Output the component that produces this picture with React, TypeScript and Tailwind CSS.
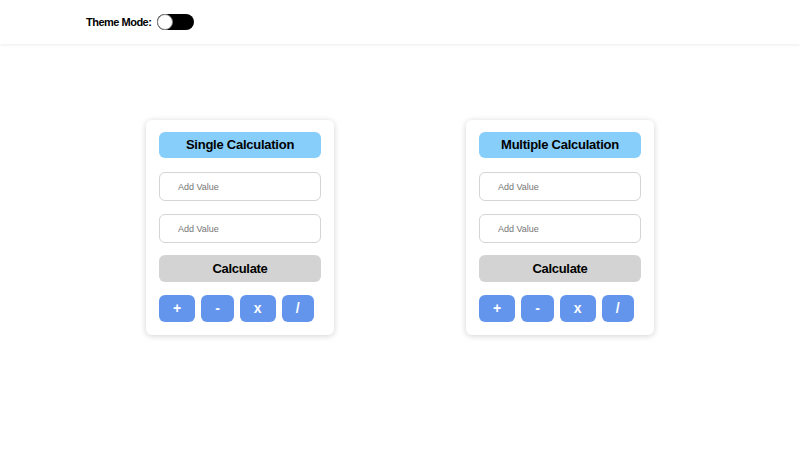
const ops = ['+', '-', 'x', '/'];

const CalcCard = ({ title }: { title: string }) => (
  <div className="w-[188px] rounded-md bg-white px-[13px] pt-[12px] pb-[13px] shadow-[0_1px_6px_rgba(0,0,0,0.18)]">
    <div className="flex h-[26px] items-center justify-center rounded-md bg-[#87cefa] text-[13px] font-bold tracking-[-0.25px] text-black">
      {title}
    </div>
    <input
      placeholder="Add Value"
      className="mt-[14px] block h-[29px] w-full rounded-md border border-[#d4d4d4] bg-white pl-[18px] text-[9px] text-black outline-none placeholder:text-[#757575]"
    />
    <input
      placeholder="Add Value"
      className="mt-[13px] block h-[29px] w-full rounded-md border border-[#d4d4d4] bg-white pl-[18px] text-[9px] text-black outline-none placeholder:text-[#757575]"
    />
    <button className="mt-[12px] flex h-[27px] w-full items-center justify-center rounded-md bg-[#d3d3d3] text-[13px] font-bold tracking-[-0.3px] text-black">
      Calculate
    </button>
    <div className="mt-[13px] flex gap-[6px]">
      {ops.map((op) => (
        <button
          key={op}
          className="h-[27px] rounded-md bg-[#6495ed] px-[14px] text-[14px] font-bold text-white"
        >
          {op}
        </button>
      ))}
    </div>
  </div>
);

export default function App() {
  return (
    <div className="min-h-[450px] bg-white font-['Liberation_Sans',Arial,sans-serif]">
      <header className="flex h-[44px] items-center pl-[86px] shadow-[0_1px_3px_rgba(0,0,0,0.08)]">
        <span className="text-[11px] font-bold tracking-[-0.5px] text-black">Theme Mode:</span>
        <div className="ml-[6px] flex h-[16px] w-[37px] items-center rounded-full bg-black">
          <div className="h-[16px] w-[16px] rounded-full border border-[#888] bg-white" />
        </div>
      </header>
      <main className="flex justify-center gap-[132px] pt-[76px]">
        <CalcCard title="Single Calculation" />
        <CalcCard title="Multiple Calculation" />
      </main>
    </div>
  );
}
